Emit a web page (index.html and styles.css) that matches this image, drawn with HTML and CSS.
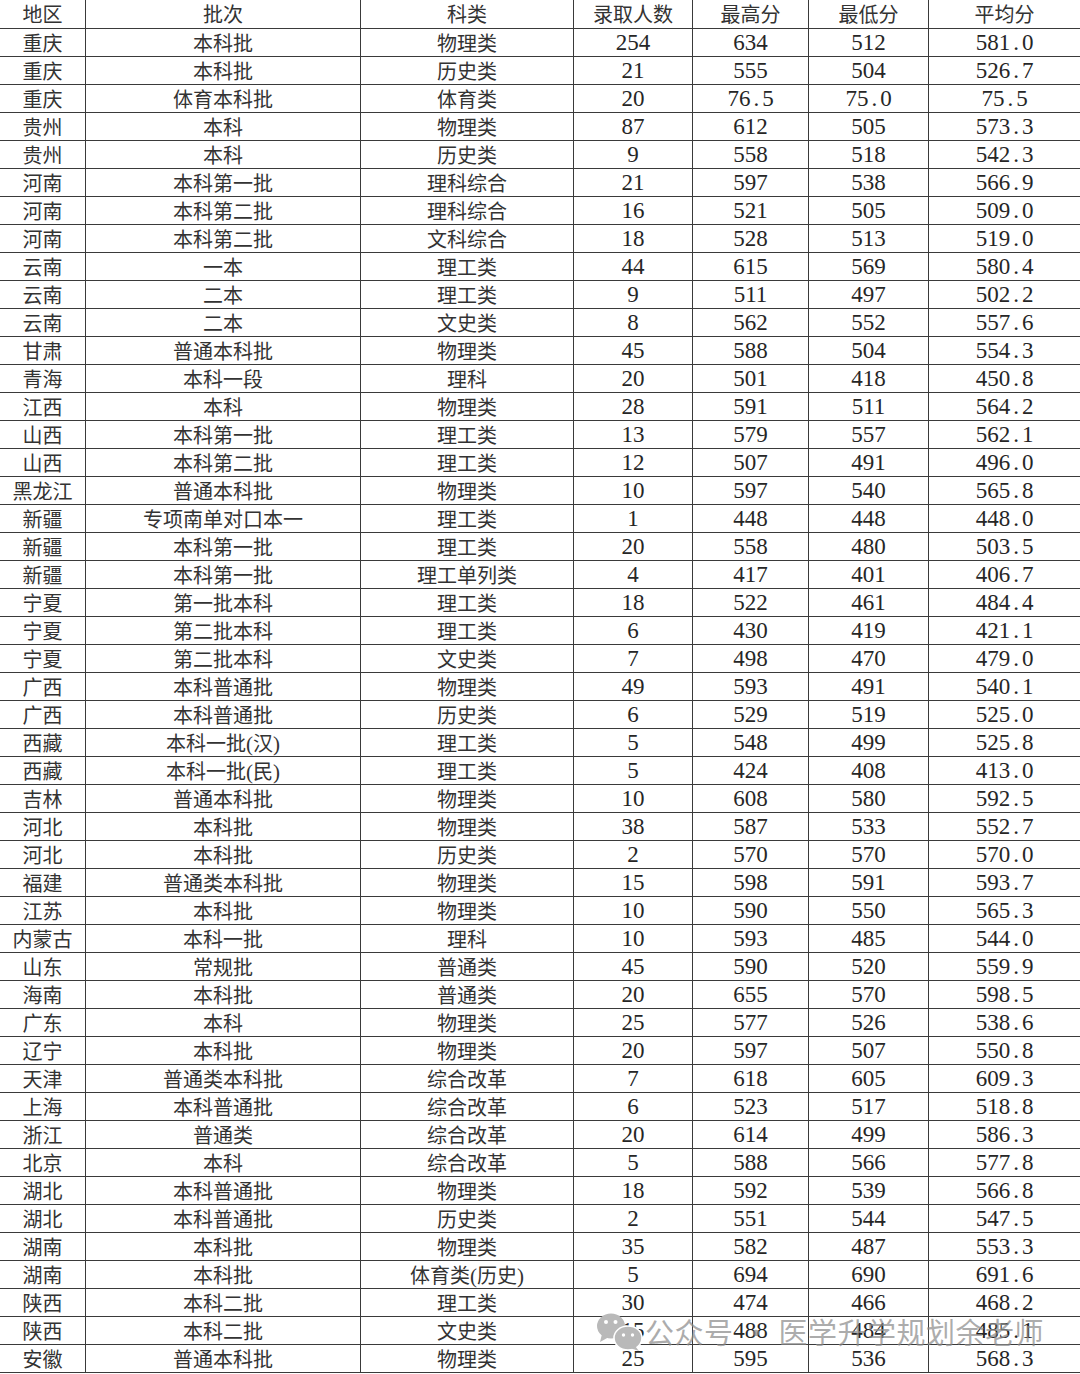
FILE: index.html
```html
<!DOCTYPE html>
<html lang="zh-CN">
<head>
<meta charset="utf-8">
<title>录取分数</title>
<link rel="stylesheet" href="styles.css">
</head>
<body>
<div class="table">
  <div class="row head"><div>地区</div><div>批次</div><div>科类</div><div>录取人数</div><div>最高分</div><div>最低分</div><div>平均分</div></div>
  <div class="row"><div>重庆</div><div>本科批</div><div>物理类</div><div class="n">254</div><div class="n">634</div><div class="n">512</div><div class="n">581<i>.</i>0</div></div>
  <div class="row"><div>重庆</div><div>本科批</div><div>历史类</div><div class="n">21</div><div class="n">555</div><div class="n">504</div><div class="n">526<i>.</i>7</div></div>
  <div class="row"><div>重庆</div><div>体育本科批</div><div>体育类</div><div class="n">20</div><div class="n">76<i>.</i>5</div><div class="n">75<i>.</i>0</div><div class="n">75<i>.</i>5</div></div>
  <div class="row"><div>贵州</div><div>本科</div><div>物理类</div><div class="n">87</div><div class="n">612</div><div class="n">505</div><div class="n">573<i>.</i>3</div></div>
  <div class="row"><div>贵州</div><div>本科</div><div>历史类</div><div class="n">9</div><div class="n">558</div><div class="n">518</div><div class="n">542<i>.</i>3</div></div>
  <div class="row"><div>河南</div><div>本科第一批</div><div>理科综合</div><div class="n">21</div><div class="n">597</div><div class="n">538</div><div class="n">566<i>.</i>9</div></div>
  <div class="row"><div>河南</div><div>本科第二批</div><div>理科综合</div><div class="n">16</div><div class="n">521</div><div class="n">505</div><div class="n">509<i>.</i>0</div></div>
  <div class="row"><div>河南</div><div>本科第二批</div><div>文科综合</div><div class="n">18</div><div class="n">528</div><div class="n">513</div><div class="n">519<i>.</i>0</div></div>
  <div class="row"><div>云南</div><div>一本</div><div>理工类</div><div class="n">44</div><div class="n">615</div><div class="n">569</div><div class="n">580<i>.</i>4</div></div>
  <div class="row"><div>云南</div><div>二本</div><div>理工类</div><div class="n">9</div><div class="n">511</div><div class="n">497</div><div class="n">502<i>.</i>2</div></div>
  <div class="row"><div>云南</div><div>二本</div><div>文史类</div><div class="n">8</div><div class="n">562</div><div class="n">552</div><div class="n">557<i>.</i>6</div></div>
  <div class="row"><div>甘肃</div><div>普通本科批</div><div>物理类</div><div class="n">45</div><div class="n">588</div><div class="n">504</div><div class="n">554<i>.</i>3</div></div>
  <div class="row"><div>青海</div><div>本科一段</div><div>理科</div><div class="n">20</div><div class="n">501</div><div class="n">418</div><div class="n">450<i>.</i>8</div></div>
  <div class="row"><div>江西</div><div>本科</div><div>物理类</div><div class="n">28</div><div class="n">591</div><div class="n">511</div><div class="n">564<i>.</i>2</div></div>
  <div class="row"><div>山西</div><div>本科第一批</div><div>理工类</div><div class="n">13</div><div class="n">579</div><div class="n">557</div><div class="n">562<i>.</i>1</div></div>
  <div class="row"><div>山西</div><div>本科第二批</div><div>理工类</div><div class="n">12</div><div class="n">507</div><div class="n">491</div><div class="n">496<i>.</i>0</div></div>
  <div class="row"><div>黑龙江</div><div>普通本科批</div><div>物理类</div><div class="n">10</div><div class="n">597</div><div class="n">540</div><div class="n">565<i>.</i>8</div></div>
  <div class="row"><div>新疆</div><div>专项南单对口本一</div><div>理工类</div><div class="n">1</div><div class="n">448</div><div class="n">448</div><div class="n">448<i>.</i>0</div></div>
  <div class="row"><div>新疆</div><div>本科第一批</div><div>理工类</div><div class="n">20</div><div class="n">558</div><div class="n">480</div><div class="n">503<i>.</i>5</div></div>
  <div class="row"><div>新疆</div><div>本科第一批</div><div>理工单列类</div><div class="n">4</div><div class="n">417</div><div class="n">401</div><div class="n">406<i>.</i>7</div></div>
  <div class="row"><div>宁夏</div><div>第一批本科</div><div>理工类</div><div class="n">18</div><div class="n">522</div><div class="n">461</div><div class="n">484<i>.</i>4</div></div>
  <div class="row"><div>宁夏</div><div>第二批本科</div><div>理工类</div><div class="n">6</div><div class="n">430</div><div class="n">419</div><div class="n">421<i>.</i>1</div></div>
  <div class="row"><div>宁夏</div><div>第二批本科</div><div>文史类</div><div class="n">7</div><div class="n">498</div><div class="n">470</div><div class="n">479<i>.</i>0</div></div>
  <div class="row"><div>广西</div><div>本科普通批</div><div>物理类</div><div class="n">49</div><div class="n">593</div><div class="n">491</div><div class="n">540<i>.</i>1</div></div>
  <div class="row"><div>广西</div><div>本科普通批</div><div>历史类</div><div class="n">6</div><div class="n">529</div><div class="n">519</div><div class="n">525<i>.</i>0</div></div>
  <div class="row"><div>西藏</div><div>本科一批<span class="p">(</span>汉<span class="p">)</span></div><div>理工类</div><div class="n">5</div><div class="n">548</div><div class="n">499</div><div class="n">525<i>.</i>8</div></div>
  <div class="row"><div>西藏</div><div>本科一批<span class="p">(</span>民<span class="p">)</span></div><div>理工类</div><div class="n">5</div><div class="n">424</div><div class="n">408</div><div class="n">413<i>.</i>0</div></div>
  <div class="row"><div>吉林</div><div>普通本科批</div><div>物理类</div><div class="n">10</div><div class="n">608</div><div class="n">580</div><div class="n">592<i>.</i>5</div></div>
  <div class="row"><div>河北</div><div>本科批</div><div>物理类</div><div class="n">38</div><div class="n">587</div><div class="n">533</div><div class="n">552<i>.</i>7</div></div>
  <div class="row"><div>河北</div><div>本科批</div><div>历史类</div><div class="n">2</div><div class="n">570</div><div class="n">570</div><div class="n">570<i>.</i>0</div></div>
  <div class="row"><div>福建</div><div>普通类本科批</div><div>物理类</div><div class="n">15</div><div class="n">598</div><div class="n">591</div><div class="n">593<i>.</i>7</div></div>
  <div class="row"><div>江苏</div><div>本科批</div><div>物理类</div><div class="n">10</div><div class="n">590</div><div class="n">550</div><div class="n">565<i>.</i>3</div></div>
  <div class="row"><div>内蒙古</div><div>本科一批</div><div>理科</div><div class="n">10</div><div class="n">593</div><div class="n">485</div><div class="n">544<i>.</i>0</div></div>
  <div class="row"><div>山东</div><div>常规批</div><div>普通类</div><div class="n">45</div><div class="n">590</div><div class="n">520</div><div class="n">559<i>.</i>9</div></div>
  <div class="row"><div>海南</div><div>本科批</div><div>普通类</div><div class="n">20</div><div class="n">655</div><div class="n">570</div><div class="n">598<i>.</i>5</div></div>
  <div class="row"><div>广东</div><div>本科</div><div>物理类</div><div class="n">25</div><div class="n">577</div><div class="n">526</div><div class="n">538<i>.</i>6</div></div>
  <div class="row"><div>辽宁</div><div>本科批</div><div>物理类</div><div class="n">20</div><div class="n">597</div><div class="n">507</div><div class="n">550<i>.</i>8</div></div>
  <div class="row"><div>天津</div><div>普通类本科批</div><div>综合改革</div><div class="n">7</div><div class="n">618</div><div class="n">605</div><div class="n">609<i>.</i>3</div></div>
  <div class="row"><div>上海</div><div>本科普通批</div><div>综合改革</div><div class="n">6</div><div class="n">523</div><div class="n">517</div><div class="n">518<i>.</i>8</div></div>
  <div class="row"><div>浙江</div><div>普通类</div><div>综合改革</div><div class="n">20</div><div class="n">614</div><div class="n">499</div><div class="n">586<i>.</i>3</div></div>
  <div class="row"><div>北京</div><div>本科</div><div>综合改革</div><div class="n">5</div><div class="n">588</div><div class="n">566</div><div class="n">577<i>.</i>8</div></div>
  <div class="row"><div>湖北</div><div>本科普通批</div><div>物理类</div><div class="n">18</div><div class="n">592</div><div class="n">539</div><div class="n">566<i>.</i>8</div></div>
  <div class="row"><div>湖北</div><div>本科普通批</div><div>历史类</div><div class="n">2</div><div class="n">551</div><div class="n">544</div><div class="n">547<i>.</i>5</div></div>
  <div class="row"><div>湖南</div><div>本科批</div><div>物理类</div><div class="n">35</div><div class="n">582</div><div class="n">487</div><div class="n">553<i>.</i>3</div></div>
  <div class="row"><div>湖南</div><div>本科批</div><div>体育类<span class="p">(</span>历史<span class="p">)</span></div><div class="n">5</div><div class="n">694</div><div class="n">690</div><div class="n">691<i>.</i>6</div></div>
  <div class="row"><div>陕西</div><div>本科二批</div><div>理工类</div><div class="n">30</div><div class="n">474</div><div class="n">466</div><div class="n">468<i>.</i>2</div></div>
  <div class="row"><div>陕西</div><div>本科二批</div><div>文史类</div><div class="n">15</div><div class="n">488</div><div class="n">484</div><div class="n">485<i>.</i>1</div></div>
  <div class="row"><div>安徽</div><div>普通本科批</div><div>物理类</div><div class="n">25</div><div class="n">595</div><div class="n">536</div><div class="n">568<i>.</i>3</div></div>

  <div class="wm">
    <svg class="wm-icon" width="50" height="42" viewBox="0 0 50 42" aria-hidden="true">
      <g fill="#b9b9b9">
        <ellipse cx="16" cy="16" rx="14" ry="12.5"/>
        <path d="M7 24 L5 32 L14 27 Z"/>
      </g>
      <ellipse cx="33" cy="28" rx="14" ry="12" fill="#b9b9b9" stroke="#ffffff" stroke-width="1.6"/>
      <path d="M40 36 L44 41 L35 38 Z" fill="#b9b9b9"/>
      <g fill="#ffffff">
        <circle cx="11" cy="12" r="2"/>
        <circle cx="20.5" cy="12" r="2"/>
        <circle cx="28.5" cy="25" r="1.7"/>
        <circle cx="37.5" cy="25" r="1.7"/>
      </g>
    </svg>
    <span class="wm-a">公众号</span><span class="wm-dot">·</span><span class="wm-b">医学升学规划余老师</span>
  </div>
</div>
</body>
</html>
```

FILE: styles.css
```css
html, body {
  margin: 0;
  padding: 0;
  background: #ffffff;
}

.table {
  position: relative;
  width: 1080px;
}

.row {
  display: grid;
  grid-template-columns: 86px 275px 213px 119px 116px 120px 151px;
  height: 28px;
}

.row.head {
  height: 29px;
}

.row > div {
  box-sizing: border-box;
  border-right: 1px solid #3a3a3a;
  border-bottom: 1px solid #3a3a3a;
  text-align: center;
  font-family: "Noto Sans CJK SC", sans-serif;
  font-size: 20px;
  line-height: 27px;
  color: #333333;
  white-space: nowrap;
  overflow: hidden;
}

.row.head > div {
  line-height: 28px;
}

.row > div:last-child {
  border-right: none;
}

.row > div.n {
  font-family: "Liberation Serif", "Times New Roman", serif;
  font-size: 23px;
  line-height: 28px;
  color: #262626;
}

.n i {
  font-style: normal;
  padding: 0 3px;
}

.p {
  font-family: "Liberation Serif", serif;
  font-size: 21px;
}

.wm {
  position: absolute;
  left: 595px;
  top: 1310px;
  display: flex;
  align-items: center;
  height: 42px;
  pointer-events: none;
  color: rgba(140, 140, 140, 0.72);
  font-family: "Noto Sans CJK SC", sans-serif;
  font-size: 29px;
  line-height: 42px;
  white-space: nowrap;
}

.wm-icon {
  display: block;
}

.wm-a {
  letter-spacing: 0.5px;
}

.wm-dot {
  display: inline-block;
  width: 45px;
  text-align: center;
}

.wm-b {
  letter-spacing: 0.5px;
}
```
